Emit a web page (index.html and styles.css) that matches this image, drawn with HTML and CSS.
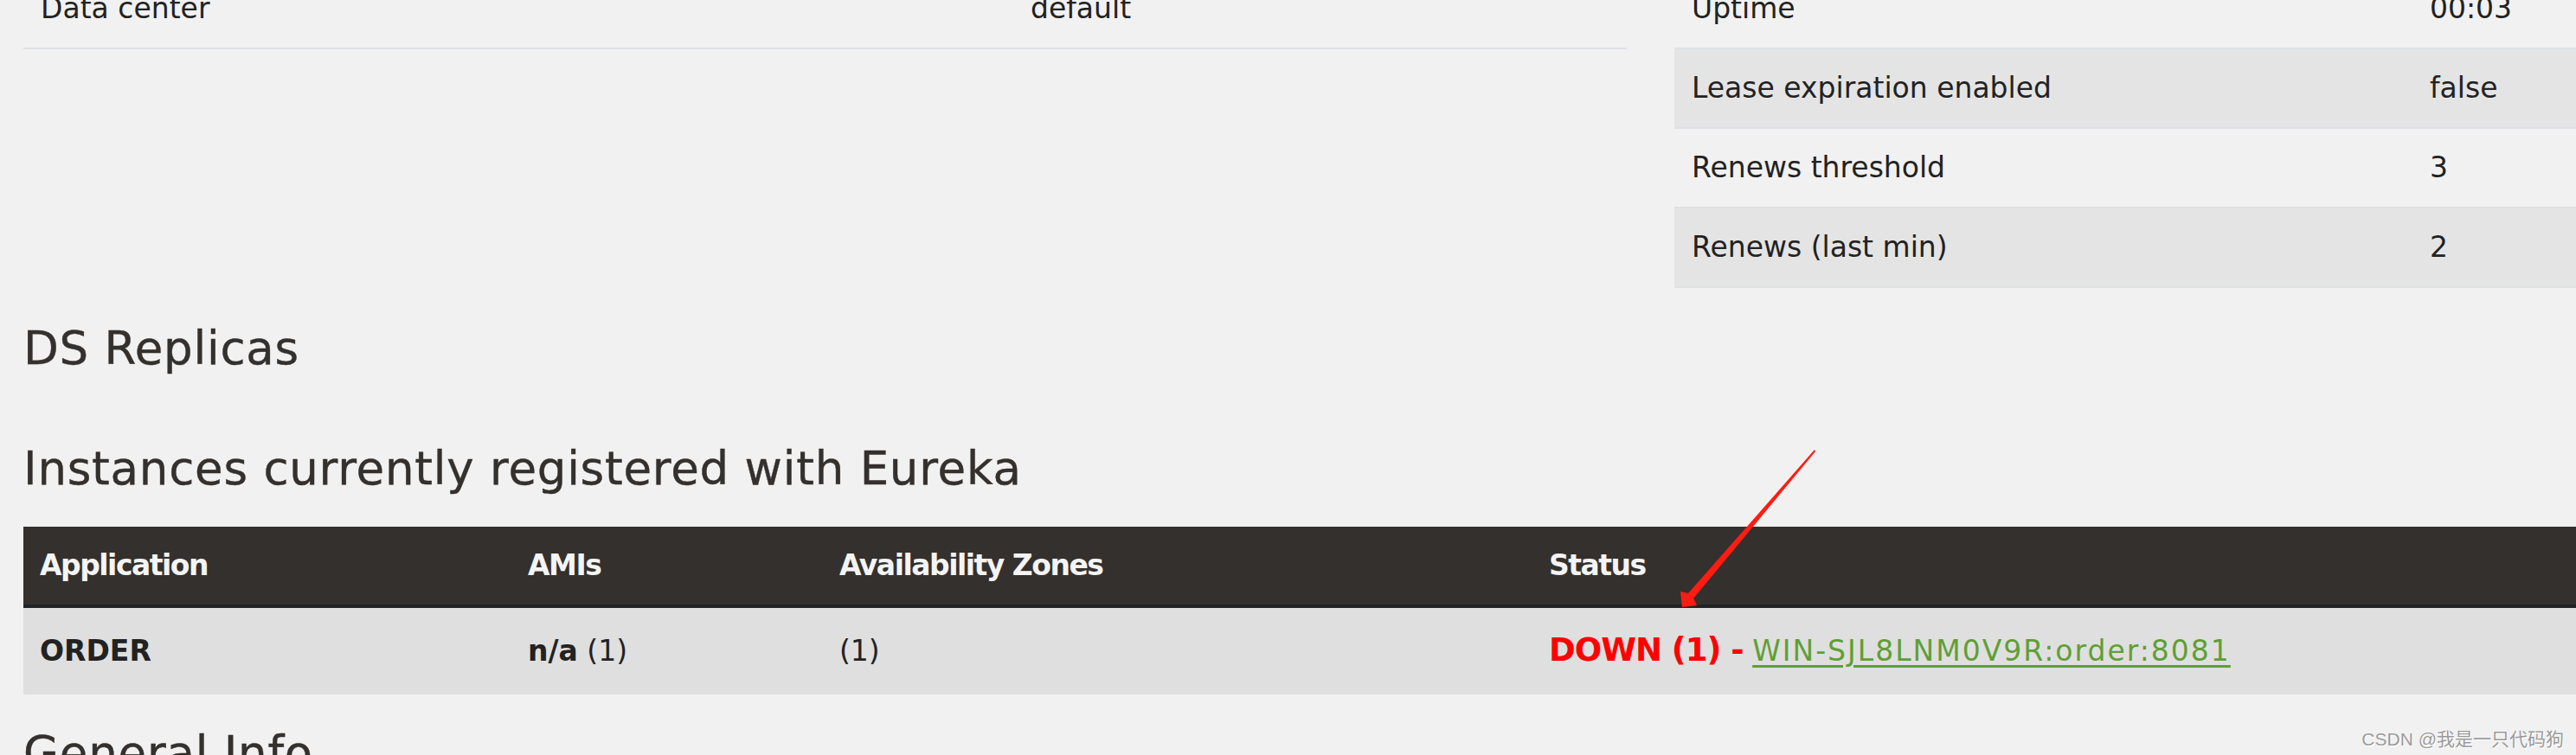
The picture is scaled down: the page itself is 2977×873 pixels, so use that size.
FILE: index.html
```html
<!DOCTYPE html>
<html lang="en">
<head>
<meta charset="utf-8">
<title>Eureka</title>
<link rel="stylesheet" href="styles.css">
</head>
<body>
<div class="page">
  <div class="top">
    <table class="info info-left">
      <tbody>
        <tr><td class="label-left">Data center</td><td>default</td></tr>
      </tbody>
    </table>
    <table class="info info-right">
      <tbody>
        <tr><td class="label-right">Uptime</td><td>00:03</td></tr>
        <tr class="shaded"><td class="label-right">Lease expiration enabled</td><td>false</td></tr>
        <tr><td class="label-right">Renews threshold</td><td>3</td></tr>
        <tr class="shaded"><td class="label-right">Renews (last min)</td><td>2</td></tr>
      </tbody>
    </table>
  </div>

  <h2 class="h-replicas">DS Replicas</h2>
  <h2 class="h-instances">Instances currently registered with Eureka</h2>

  <table class="instances">
    <thead>
      <tr>
        <th class="c-app">Application</th>
        <th class="c-ami">AMIs</th>
        <th class="c-zone">Availability Zones</th>
        <th class="c-status">Status</th>
      </tr>
    </thead>
    <tbody>
      <tr>
        <td><b>ORDER</b></td>
        <td><b>n/a</b> (1)</td>
        <td>(1)</td>
        <td><span class="down">DOWN (1) -</span> <a class="inst-link" href="#">WIN-SJL8LNM0V9R:order:8081</a></td>
      </tr>
    </tbody>
  </table>

  <h2 class="h-general">General Info</h2>
</div>

<svg class="arrow" width="180" height="200" viewBox="0 0 180 200" aria-hidden="true">
  <polygon points="167,10 168,12 27,182 31,190 14,192 12,174 21,176" fill="#ff1c12"/>
</svg>

<div class="watermark">CSDN @我是一只代码狗</div>
</body>
</html>
```

FILE: styles.css
```css
html, body {
  margin: 0;
  padding: 0;
  overflow: hidden;
  background: #f1f1f1;
}

body {
  width: 2977px;
  height: 873px;
  position: relative;
  font-family: "DejaVu Sans", "Noto Sans", sans-serif;
  color: #222222;
}

.page {
  padding-left: 27px;
  display: flex;
  flex-direction: column;
  align-items: flex-start;
}

.top {
  display: flex;
  gap: 55px;
  align-items: flex-start;
  margin-top: -35px;
}

table {
  border-collapse: separate;
  border-spacing: 0;
  table-layout: fixed;
}

.info td {
  font-size: 33px;
  line-height: 48px;
  padding: 21px 20px;
  border-bottom: 2px solid #dde1e6;
  vertical-align: middle;
  white-space: nowrap;
  text-align: left;
}

.info-left {
  width: 1853px;
}

.label-left {
  width: 1104px;
}

.info-right {
  width: 1120px;
}

.label-right {
  width: 813px;
}

.shaded td {
  background: #e4e4e4;
}

h2 {
  margin: 0;
  font-family: "DejaVu Sans", "Noto Sans", sans-serif;
  font-weight: normal;
  font-size: 53px;
  line-height: 64px;
  color: #34302d;
  letter-spacing: 0.75px;
  white-space: nowrap;
  -webkit-text-stroke: 0.4px #34302d;
}

.h-replicas {
  margin-top: 38px;
}

.h-instances {
  margin-top: 75px;
}

.instances {
  margin-top: 35px;
  width: 2977px;
}

.instances th {
  background: #34302d;
  color: #f4f4f4;
  font-size: 33px;
  font-weight: bold;
  letter-spacing: -1.5px;
  line-height: 48px;
  padding: 21px 19px;
  border-bottom: 4px solid #222326;
  text-align: left;
  vertical-align: middle;
  white-space: nowrap;
}

.c-app { width: 526px; }
.c-ami { width: 322px; }
.c-zone { width: 782px; }

.instances td {
  background: #dfdfdf;
  font-size: 33px;
  line-height: 48px;
  padding: 25px 19px 26px;
  vertical-align: middle;
  white-space: nowrap;
}

.instances b {
  font-weight: bold;
}

.down {
  color: #ff0000;
  font-weight: bold;
  font-size: 37px;
  letter-spacing: -1px;
}

.inst-link {
  color: #5f9f35;
  text-decoration: underline;
  text-underline-offset: 5px;
  text-decoration-thickness: 3px;
  letter-spacing: 2px;
}

.h-general {
  margin-top: 36px;
}

.arrow {
  position: absolute;
  left: 1930px;
  top: 510px;
}

.watermark {
  position: absolute;
  right: 14px;
  top: 838px;
  font-family: "Liberation Sans", "Noto Sans CJK SC", sans-serif;
  font-size: 21px;
  color: #9a9a9a;
  text-shadow: 0 0 1px #ffffff, 1px 1px 0 #ffffff;
  white-space: nowrap;
}
```
